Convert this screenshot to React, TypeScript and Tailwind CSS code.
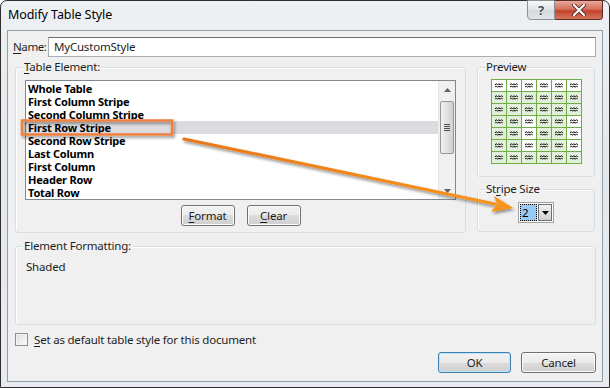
import React from "react";

const U = ({ children }: { children: React.ReactNode }) => <span className="underline underline-offset-[2px]">{children}</span>;

function Legend({ children }: { children: React.ReactNode }) {
  return (
    <span className="absolute left-[7px] top-[-9px] whitespace-nowrap bg-[#f0f0f0] px-[1px] leading-[16px] text-[11.5px] tracking-[-0.2px] text-[#1e1e1e]">
      {children}
    </span>
  );
}

function WinButton({ children, className = "", def = false }: { children: React.ReactNode; className?: string; def?: boolean }) {
  return (
    <div
      className={
        "flex items-center justify-center rounded-[3px] border text-[11.5px] tracking-[-0.2px] text-[#1e1e1e] bg-[linear-gradient(#f2f2f2_0%,#ebebeb_50%,#dddddd_50%,#cfcfcf_100%)] " +
        (def
          ? "border-[#3c7fb1] shadow-[inset_0_0_0_1px_#bfe4f7] "
          : "border-[#707070] shadow-[inset_0_0_0_1px_#fcfcfc] ") +
        className
      }
    >
      {children}
    </div>
  );
}

const items = [
  "Whole Table",
  "First Column Stripe",
  "Second Column Stripe",
  "First Row Stripe",
  "Second Row Stripe",
  "Last Column",
  "First Column",
  "Header Row",
  "Total Row",
];

function Glyph() {
  return (
    <svg width="8" height="5" viewBox="0 0 8 5" className="block">
      <polyline points="0,2 1.3,0.6 2.6,2 3.9,0.6 5.2,2 6.5,0.6 7.8,2" fill="none" stroke="#111" strokeWidth="1" />
      <polyline points="0,4.3 1.3,2.9 2.6,4.3 3.9,2.9 5.2,4.3 6.5,2.9 7.8,4.3" fill="none" stroke="#111" strokeWidth="1" />
    </svg>
  );
}

function PreviewGrid() {
  const cells: React.ReactNode[] = [];
  for (let r = 0; r < 7; r++) {
    for (let c = 0; c < 6; c++) {
      const white = r === 0 || ((r === 3 || r === 4 || r === 5) && (c === 2 || c === 5));
      cells.push(
        <div key={r + "-" + c} className={"flex items-center justify-center " + (white ? "bg-white" : "bg-[#e2efda]")}>
          <Glyph />
        </div>
      );
    }
  }
  return (
    <div className="grid grid-cols-[repeat(6,14px)] grid-rows-[repeat(7,11px)] gap-px bg-[#70ad47] p-px w-[91px] h-[85px]">
      {cells}
    </div>
  );
}

export default function App() {
  return (
    <div className="relative w-[610px] h-[388px] overflow-hidden bg-white font-['Noto_Sans',sans-serif]">
      <div className="flex h-full w-full flex-col rounded-t-[7px] border border-[#2e2e2e] bg-[linear-gradient(180deg,#eef1f4_0%,#e3e8ec_40%,#e8ecf0_100%)] px-[6px] pb-[5px]">
        {/* title bar */}
        <div className="flex h-[29px] items-start justify-between">
          <div className="pl-[1px] pt-[5px] text-[12.5px] leading-[18px] tracking-[-0.1px] text-black">Modify Table Style</div>
          <div className="mt-[-1px] flex">
            <div className="flex h-[20px] w-[28px] items-center justify-center rounded-bl-[4px] border border-[#8a9199] bg-[linear-gradient(#f6f7f8,#dfe3e7_50%,#d2d7dc_50%,#e2e6ea)]">
              <span className="text-[13px] font-bold leading-none text-[#4a5058] [text-shadow:0_0_1px_#fff]">?</span>
            </div>
            <div className="flex h-[20px] w-[48px] items-center justify-center rounded-br-[4px] border border-l-0 border-[#5a2a24] bg-[linear-gradient(#e9a99c,#d5705c_45%,#c1412b_55%,#d8765d)]">
              <svg width="14" height="12" viewBox="0 0 14 12">
                <path d="M2 1 L12 11 M12 1 L2 11" stroke="#5b2a22" strokeWidth="4" strokeLinecap="round" />
                <path d="M2 1 L12 11 M12 1 L2 11" stroke="#ffffff" strokeWidth="2.2" strokeLinecap="round" />
              </svg>
            </div>
          </div>
        </div>

        {/* client area */}
        <div className="flex flex-1 flex-col border border-[#959ea8] bg-[#f0f0f0] pl-[7px] pr-[6px] pt-[6px] text-[11.5px] tracking-[-0.2px] text-[#1e1e1e]">
          {/* name row */}
          <div className="flex h-[20px] items-center">
            <div className="ml-[-2px] w-[35px] whitespace-nowrap leading-[16px] tracking-[-0.4px]">
              <U>N</U>ame:
            </div>
            <div className="flex h-[20px] flex-1 items-center border border-[#abadb3] border-t-[#707070] bg-white pl-[5px] leading-[16px]">
              MyCustomStyle
            </div>
          </div>

          {/* main row */}
          <div className="mt-[10px] flex gap-[11px]">
            {/* table element group */}
            <div className="relative flex h-[166px] w-[451px] flex-col rounded-[3px] border border-[#d5dfe5] px-[9px] pt-[12px] pb-[6px] shadow-[inset_1px_1px_0_#fff]">
              <Legend>
                <U>T</U>able Element:
              </Legend>
              <div className="flex h-[121px] border border-[#82878f] bg-white">
                <div className="flex-1 pt-[1px]">
                  {items.map((it, i) => (
                    <div
                      key={it}
                      className={
                        "h-[13px] overflow-hidden pl-[2px] text-[11px] font-bold leading-[13px] tracking-[-0.2px] text-black " +
                        (i === 3 ? "bg-[#dcdce0]" : "")
                      }
                    >
                      {it}
                    </div>
                  ))}
                </div>
                {/* scrollbar */}
                <div className="flex w-[17px] flex-col bg-[#f0f0f0] border-l border-[#e6e6e6]">
                  <div className="flex h-[17px] items-center justify-center">
                    <svg width="7" height="4" viewBox="0 0 7 4">
                      <path d="M0 4 L3.5 0 L7 4 Z" fill="#606060" />
                    </svg>
                  </div>
                  <div className="mx-[1px] mt-[3px] flex h-[53px] items-center justify-center rounded-[2px] border border-[#979797] bg-[linear-gradient(90deg,#f1f1f1,#e0e0e0_50%,#d1d1d1)]">
                    <div className="flex flex-col gap-[1px]">
                      <div className="h-px w-[6px] bg-[#505050]" />
                      <div className="h-px w-[6px] bg-[#505050]" />
                      <div className="h-px w-[6px] bg-[#505050]" />
                      <div className="h-px w-[6px] bg-[#505050]" />
                    </div>
                  </div>
                  <div className="flex-1" />
                  <div className="flex h-[17px] items-center justify-center">
                    <svg width="7" height="4" viewBox="0 0 7 4">
                      <path d="M0 0 L3.5 4 L7 0 Z" fill="#606060" />
                    </svg>
                  </div>
                </div>
              </div>
              <div className="mt-[5px] flex justify-center gap-[12px]">
                <WinButton className="h-[21px] w-[54px]">
                  <span>
                    <U>F</U>ormat
                  </span>
                </WinButton>
                <WinButton className="h-[21px] w-[54px]">
                  <span>
                    <U>C</U>lear
                  </span>
                </WinButton>
              </div>
            </div>

            {/* right column */}
            <div className="flex w-[118px] flex-col gap-[12px]">
              <div className="relative flex h-[110px] justify-center rounded-[3px] border border-[#d5dfe5] pt-[11px] shadow-[inset_1px_1px_0_#fff]">
                <Legend>Preview</Legend>
                <PreviewGrid />
              </div>
              <div className="relative flex h-[43px] justify-center rounded-[3px] border border-[#d5dfe5] pt-[12px] shadow-[inset_1px_1px_0_#fff]">
                <Legend>
                  St<U>r</U>ipe Size
                </Legend>
                <div className="flex h-[21px] w-[36px] border border-[#a0a0a0] bg-white p-[1px]">
                  <div className="flex w-[17px] items-center bg-[#99c9f5] outline-1 outline-dotted outline-black -outline-offset-1 pl-[2px] leading-[14px] text-black">
                    2
                  </div>
                  <div className="ml-[1px] flex flex-1 items-center justify-center border border-[#707070] bg-[linear-gradient(#f2f2f2,#e0e0e0_50%,#d0d0d0)]">
                    <svg width="7" height="4" viewBox="0 0 7 4">
                      <path d="M0 0 L3.5 4 L7 0 Z" fill="#000" />
                    </svg>
                  </div>
                </div>
              </div>
            </div>
          </div>

          {/* element formatting */}
          <div className="relative mt-[13px] h-[79px] rounded-[3px] border border-[#d5dfe5] pl-[10px] pt-[12px] shadow-[inset_1px_1px_0_#fff]">
            <Legend>Element Formatting:</Legend>
            <div className="leading-[16px]">Shaded</div>
          </div>

          {/* checkbox */}
          <div className="mt-[8px] flex h-[13px] items-center">
            <div className="h-[13px] w-[13px] border border-[#8f8f8f] bg-[linear-gradient(135deg,#dcdcdc,#fdfdfd)] shadow-[inset_0_0_0_1px_#f4f4f4]" />
            <div className="ml-[6px] leading-[16px]">
              <U>S</U>et as default table style for this document
            </div>
          </div>

          {/* buttons */}
          <div className="mt-[6px] flex justify-end gap-[10px]">
            <WinButton def className="h-[21px] w-[73px]">OK</WinButton>
            <WinButton className="h-[21px] w-[75px]">Cancel</WinButton>
          </div>
        </div>
      </div>

      {/* annotation overlay */}
      <svg className="pointer-events-none absolute inset-0" width="610" height="388" viewBox="0 0 610 388">
        <defs>
          <filter id="sh" x="-20%" y="-50%" width="140%" height="200%">
            <feDropShadow dx="1.5" dy="2" stdDeviation="1.5" floodColor="#000" floodOpacity="0.45" />
          </filter>
          <linearGradient id="og" x1="0" y1="0" x2="1" y2="0">
            <stop offset="0" stopColor="#e8771e" />
            <stop offset="1" stopColor="#f7941d" />
          </linearGradient>
        </defs>
        <rect x="22" y="120.5" width="150" height="14" fill="none" stroke="#f0803c" strokeWidth="2.5" filter="url(#sh)" />
        <g filter="url(#sh)">
          <line x1="184" y1="139" x2="495" y2="204" stroke="url(#og)" strokeWidth="3.2" strokeLinecap="round" />
          <polygon points="513,208 491,212 497,204 494,196" fill="#f7941d" />
        </g>
      </svg>
    </div>
  );
}
